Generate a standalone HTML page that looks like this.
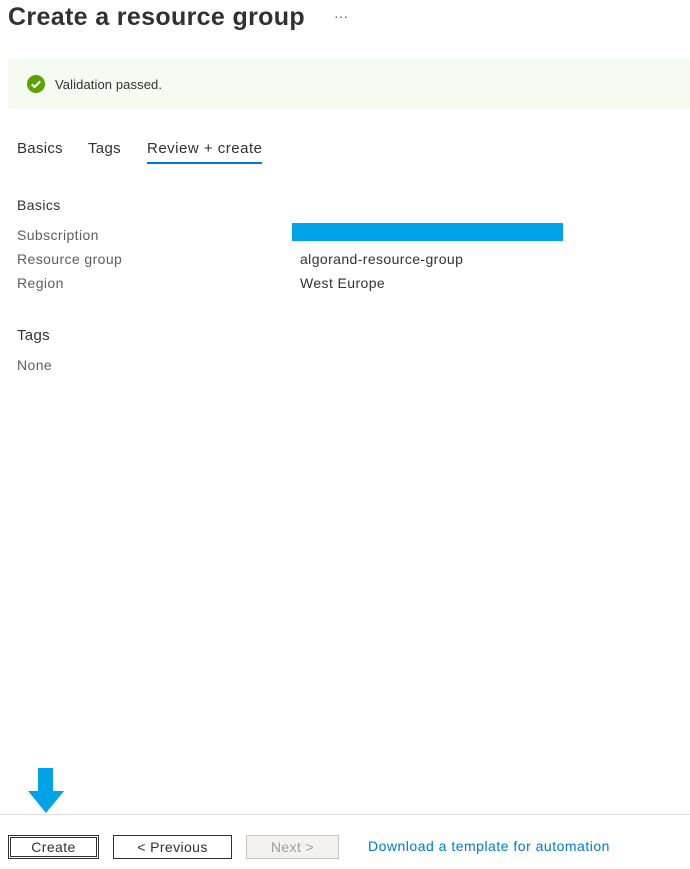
<!DOCTYPE html>
<html><head><meta charset="utf-8"><style>
*{margin:0;padding:0;box-sizing:border-box}
body{width:690px;height:869px;background:#fff;font-family:"Liberation Sans",sans-serif;position:relative;overflow:hidden;color:#323130}
.a{position:absolute;white-space:nowrap}
.s{font-size:14px;letter-spacing:0.4px}
.g{color:#605e5c}
.t{font-size:15px;letter-spacing:0.3px}
</style></head><body>
<div class="a" style="left:8px;top:3px;font-size:25px;font-weight:bold;color:#323130;letter-spacing:0.35px">Create a resource group</div>
<div class="a" style="left:334px;top:8px;font-size:14px;color:#555">···</div>
<div class="a" style="left:8px;top:59px;width:682px;height:50px;background:#f5fbf0"></div>
<svg class="a" style="left:27px;top:75px" width="18" height="18" viewBox="0 0 18 18"><circle cx="9" cy="9" r="9" fill="#57a300"/><path d="M4.8 9.3l2.8 2.7 5.6-5.6" stroke="#fff" stroke-width="2.2" fill="none"/></svg>
<div class="a" style="left:55px;top:77px;font-size:13px;letter-spacing:0.1px;color:#323130">Validation passed.</div>
<div class="a t" style="left:17px;top:140px">Basics</div>
<div class="a t" style="left:88px;top:140px">Tags</div>
<div class="a t" style="left:147px;top:140px;letter-spacing:0.5px">Review + create</div>
<div class="a" style="left:147px;top:162px;width:115px;height:2px;background:#0078d4"></div>
<div class="a s" style="left:17px;top:197px">Basics</div>
<div class="a s g" style="left:17px;top:227px">Subscription</div>
<div class="a" style="left:292px;top:223px;width:271px;height:18px;background:#00a2e8"></div>
<div class="a s g" style="left:17px;top:251px">Resource group</div>
<div class="a s" style="left:300px;top:251px">algorand-resource-group</div>
<div class="a s g" style="left:17px;top:275px">Region</div>
<div class="a s" style="left:300px;top:275px">West Europe</div>
<div class="a t" style="left:17px;top:327px">Tags</div>
<div class="a s g" style="left:17px;top:357px">None</div>
<svg class="a" style="left:26px;top:768px" width="40" height="46" viewBox="0 0 40 46"><path d="M12 0h15v23h11L20 45 2 23h10z" fill="#00a2e8"/></svg>
<div class="a" style="left:0;top:814px;width:690px;height:1px;background:#e1dfdd"></div>
<div class="a s" style="left:8px;top:835px;width:91px;height:24px;border:1px solid #323130;outline:1px solid #323130;outline-offset:-3px;text-align:center;line-height:22px">Create</div>
<div class="a s" style="left:113px;top:835px;width:119px;height:24px;border:1px solid #323130;text-align:center;line-height:22px">&lt; Previous</div>
<div class="a s" style="left:246px;top:835px;width:93px;height:24px;border:1px solid #c8c6c4;background:#f3f2f1;color:#a19f9d;text-align:center;line-height:22px">Next &gt;</div>
<div class="a s" style="left:368px;top:838px;color:#0078d4;letter-spacing:0.5px">Download a template for automation</div>
</body></html>
